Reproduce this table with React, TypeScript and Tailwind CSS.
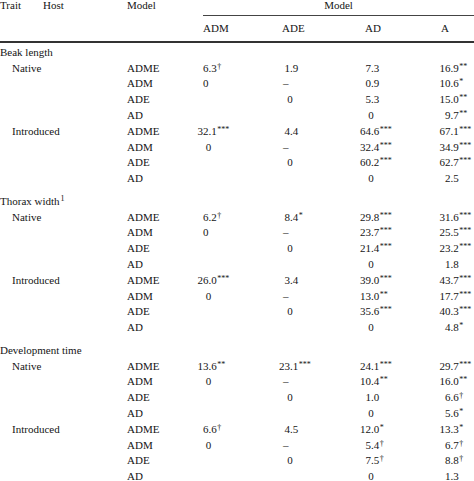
import React from 'react';

type Host = { name: string; rows: string[][] };
type Section = { trait: string; note?: string; hosts: Host[] };

const MODELS = ['ADME', 'ADM', 'ADE', 'AD'];

const SECTIONS: Section[] = [
  {
    trait: 'Beak length',
    hosts: [
      {
        name: 'Native',
        rows: [
          ['6.3†', '1.9', '7.3', '16.9**'],
          ['0<', '–', '0.9', '10.6*'],
          ['', '0', '5.3', '15.0**'],
          ['', '', '0', '9.7**'],
        ],
      },
      {
        name: 'Introduced',
        rows: [
          ['32.1***', '4.4', '64.6***', '67.1***'],
          ['0', '–', '32.4***', '34.9***'],
          ['', '0', '60.2***', '62.7***'],
          ['', '', '0', '2.5'],
        ],
      },
    ],
  },
  {
    trait: 'Thorax width',
    note: '1',
    hosts: [
      {
        name: 'Native',
        rows: [
          ['6.2†', '8.4*', '29.8***', '31.6***'],
          ['0<', '–', '23.7***', '25.5***'],
          ['', '0', '21.4***', '23.2***'],
          ['', '', '0', '1.8'],
        ],
      },
      {
        name: 'Introduced',
        rows: [
          ['26.0***', '3.4', '39.0***', '43.7***'],
          ['0', '–', '13.0**', '17.7***'],
          ['', '0', '35.6***', '40.3***'],
          ['', '', '0', '4.8*'],
        ],
      },
    ],
  },
  {
    trait: 'Development time',
    hosts: [
      {
        name: 'Native',
        rows: [
          ['13.6**', '23.1***', '24.1***', '29.7***'],
          ['0', '–', '10.4**', '16.0**'],
          ['', '0', '1.0', '6.6†'],
          ['', '', '0', '5.6*'],
        ],
      },
      {
        name: 'Introduced',
        rows: [
          ['6.6†', '4.5', '12.0*', '13.3*'],
          ['0', '–', '5.4†', '6.7†'],
          ['', '0', '7.5†', '8.8†'],
          ['', '', '0', '1.3'],
        ],
      },
    ],
  },
];

// column widths and decimal-point positions, relative to each column's left edge
const COL_W = ['w-[77px]', 'w-[78px]', 'w-[80px]', 'w-[49px]'];
const INT_W = ['w-[18.5px]', 'w-[23px]', 'w-[26px]', 'w-[25.5px]'];
const ZERO_ML = ['ml-[15.75px]', 'ml-[20.25px]', 'ml-[23.25px]', 'ml-[22.75px]'];

const Value = ({ v, col }: { v: string; col: number }) => {
  if (!v) return null;
  if (v === '–') return <span className="ml-[16px]">–</span>;
  if (v === '0') return <span className={ZERO_ML[col]}>0</span>;
  if (v === '0<') return <span className="ml-[13px]">0</span>;

  const m = v.match(/^([0-9]+)\.([0-9]+)([†*]*)$/);
  if (!m) return <span>{v}</span>;
  const [, int, frac, mark] = m;
  return (
    <span className="whitespace-nowrap">
      <span className={`inline-block text-right ${INT_W[col]}`}>{int}</span>.{frac}
      {mark && <sup className="text-[8px] ml-[0.5px] -top-[3px]">{mark}</sup>}
    </span>
  );
};

export default function App() {
  return (
    <div className="w-[474px] h-[481px] overflow-hidden bg-white text-[#151515] text-[11px] font-['Liberation_Serif','Times_New_Roman',serif]">
      {/* header */}
      <div className="flex h-[10px] leading-[10px] whitespace-nowrap">
        <div className="w-[43px]">Trait</div>
        <div className="w-[84px]">Host</div>
        <div className="w-[76px]">Model</div>
        <div className="flex-1 text-center">Model</div>
      </div>
      <div className="mt-[5px] ml-[203px] h-px bg-[#444]" />
      <div className="mt-[4px] flex h-[16px] leading-[16px]">
        <div className="w-[190px]" />
        <div className={`${COL_W[0]} pl-[13px]`}>ADM</div>
        <div className={`${COL_W[1]} pl-[15px]`}>ADE</div>
        <div className={`${COL_W[2]} pl-[20px]`}>AD</div>
        <div className={`${COL_W[3]} pl-[16px]`}>A</div>
      </div>
      <div className="mt-[5px] h-[1.5px] bg-[#333]" />

      {/* body */}
      {SECTIONS.map((s, si) => (
        <div key={s.trait} className={si === 0 ? 'mt-[2.4px]' : 'mt-[6.8px]'}>
          <div className="h-[15.8px] leading-[15.8px] whitespace-nowrap">
            {s.trait}
            {s.note && <sup className="text-[8px] ml-[1px]">{s.note}</sup>}
          </div>
          {s.hosts.map((h) =>
            h.rows.map((r, ri) => (
              <div key={h.name + ri} className="flex h-[15.8px] leading-[15.8px] whitespace-nowrap">
                <div className="w-[127px] pl-[12px]">{ri === 0 ? h.name : ''}</div>
                <div className="w-[63px]">{MODELS[ri]}</div>
                {r.map((v, ci) => (
                  <div key={ci} className={`${COL_W[ci]} shrink-0`}>
                    <Value v={v} col={ci} />
                  </div>
                ))}
              </div>
            ))
          )}
        </div>
      ))}
    </div>
  );
}
